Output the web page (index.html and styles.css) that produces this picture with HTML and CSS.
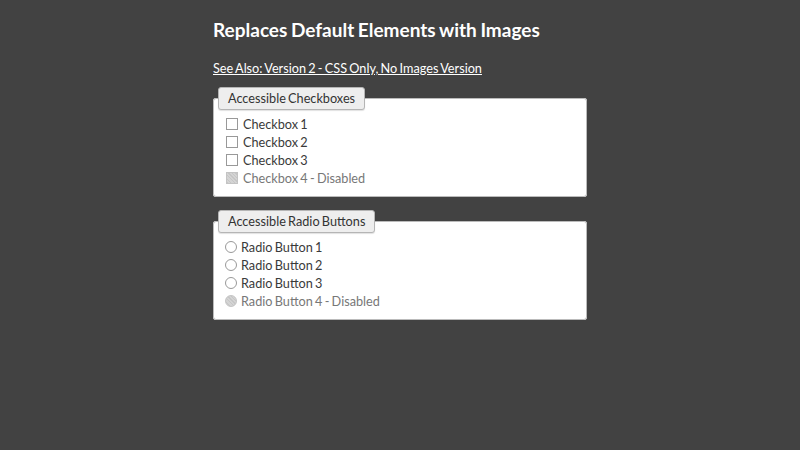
FILE: index.html
```html
<!DOCTYPE html>
<html lang="en">
<head>
<meta charset="utf-8">
<title>Accessible Checkboxes and Radio Buttons</title>
<link rel="stylesheet" href="styles.css">
</head>
<body>
<main class="page">
  <h1 class="title">Replaces Default Elements with Images</h1>
  <p class="see-also"><a href="#">See Also: Version 2 - CSS Only, No Images Version</a></p>

  <fieldset class="group">
    <legend class="group-legend">Accessible Checkboxes</legend>
    <ul class="options">
      <li class="option"><span class="box"></span><span class="label">Checkbox 1</span></li>
      <li class="option"><span class="box"></span><span class="label">Checkbox 2</span></li>
      <li class="option"><span class="box"></span><span class="label">Checkbox 3</span></li>
      <li class="option disabled"><span class="box"></span><span class="label">Checkbox 4 - Disabled</span></li>
    </ul>
  </fieldset>

  <fieldset class="group">
    <legend class="group-legend">Accessible Radio Buttons</legend>
    <ul class="options radios">
      <li class="option"><span class="radio"></span><span class="label">Radio Button 1</span></li>
      <li class="option"><span class="radio"></span><span class="label">Radio Button 2</span></li>
      <li class="option"><span class="radio"></span><span class="label">Radio Button 3</span></li>
      <li class="option disabled"><span class="radio"></span><span class="label">Radio Button 4 - Disabled</span></li>
    </ul>
  </fieldset>
</main>
</body>
</html>
```

FILE: styles.css
```css
html, body {
  margin: 0;
  padding: 0;
}

body {
  background: #424242;
  font-family: Lato, "Open Sans", sans-serif;
  color: #3a3a3a;
}

.page {
  width: 374px;
  margin: 0 auto;
  padding-top: 18px;
}

.title {
  margin: 0;
  font-size: 19px;
  font-weight: 700;
  line-height: 24px;
  word-spacing: -1px;
  color: #fff;
}

.see-also {
  margin: 17px 0 0;
  font-size: 12.7px;
  line-height: 18px;
  word-spacing: -1px;
}

.see-also a {
  color: #fff;
  text-decoration: underline;
}

.group {
  margin: 10px 0 0;
  padding: 5px 12px 9px;
  background: #fff;
  border: 1px solid #bbb;
  border-radius: 3px;
}

.group + .group {
  margin-top: 13px;
}

.group-legend {
  margin-left: -8px;
  padding: 2px 9px 3px;
  font-size: 12.7px;
  line-height: 16px;
  word-spacing: -1px;
  color: #333;
  background: #eee;
  border: 1px solid #b5b5b5;
  border-radius: 3px;
  box-shadow: 0 1px 1px rgba(0, 0, 0, 0.12);
}

.options {
  list-style: none;
  margin: 0;
  padding: 0;
}

.option {
  display: flex;
  align-items: center;
  gap: 5px;
  height: 18px;
  font-size: 12.7px;
  word-spacing: -1px;
}

.radios .option {
  margin-left: -1px;
  gap: 4px;
}

.box {
  width: 10px;
  height: 10px;
  border: 1px solid #999;
  background: #fff;
  flex: none;
}

.radio {
  width: 10px;
  height: 10px;
  border: 1px solid #999;
  border-radius: 50%;
  background: #fff;
  flex: none;
}

.option.disabled {
  color: #777;
}

.option.disabled .box,
.option.disabled .radio {
  border-color: #c4c4c4;
  background: repeating-linear-gradient(45deg, #c6c6c6 0 1px, #d4d4d4 1px 2.5px);
}
```
